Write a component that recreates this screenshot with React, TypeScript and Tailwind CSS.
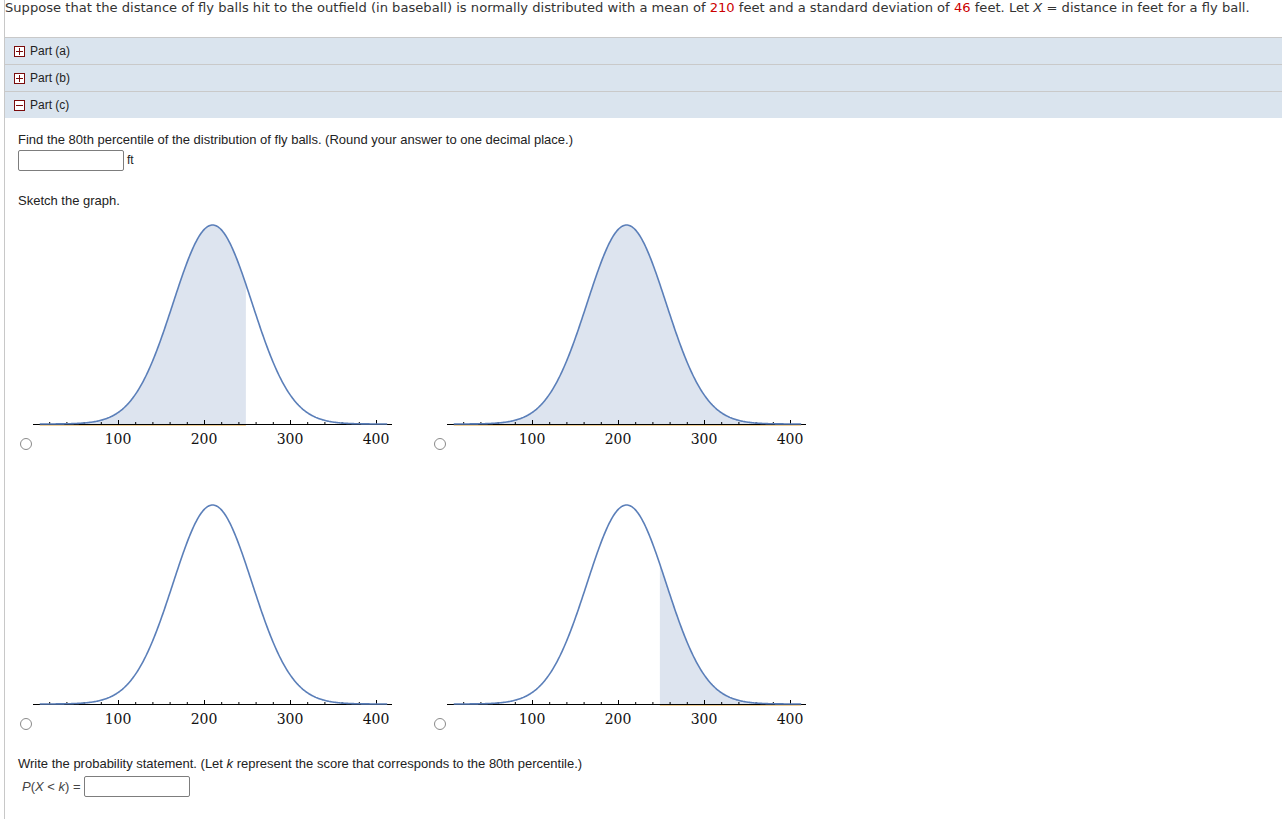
import React from 'react';

const MEAN = 210;
const SD = 46;
const PX = 0.86; // px per foot
const BASE = 209;
const PEAK = 199;
const K = 248.7;

type Shade = 'left' | 'all' | 'none' | 'right';

const xOf = (v: number) => v * PX;
const yOf = (v: number) => BASE - PEAK * Math.exp(-((v - MEAN) ** 2) / (2 * SD * SD));

const curvePoints = (from: number, to: number) => {
  const pts: string[] = [];
  let v = from;
  for (; v < to; v += 1) {
    pts.push(`${xOf(v).toFixed(2)},${yOf(v).toFixed(2)}`);
  }
  pts.push(`${xOf(to).toFixed(2)},${yOf(to).toFixed(2)}`);
  return pts;
};

const START = 9;
const END = 413;

const NormalGraph = ({ shade }: { shade: Shade }) => {
  let area: { a: number; b: number } | null = null;
  if (shade === 'left') area = { a: START, b: K };
  if (shade === 'all') area = { a: START, b: END };
  if (shade === 'right') area = { a: K, b: END };

  const ticks: number[] = [];
  for (let v = 20; v <= 400; v += 20) ticks.push(v);

  return (
    <svg width="372" height="235" viewBox="0 0 372 235" className="block">
      {area && (
        <polygon
          points={[
            `${xOf(area.a)},${BASE}`,
            ...curvePoints(area.a, area.b),
            `${xOf(area.b)},${BASE}`,
          ].join(' ')}
          fill="#dde4ef"
        />
      )}
      {area && (
        <line
          x1={xOf(area.a)}
          x2={xOf(area.b)}
          y1={BASE + 1.5}
          y2={BASE + 1.5}
          stroke="#f0cf98"
          strokeWidth="1"
        />
      )}
      <line x1="1" x2="360" y1={BASE + 0.5} y2={BASE + 0.5} stroke="#000" strokeWidth="1" />
      {ticks.map((v) => (
        <line
          key={v}
          x1={xOf(v) + 0.5}
          x2={xOf(v) + 0.5}
          y1={BASE}
          y2={v % 100 === 0 ? BASE - 4 : BASE - 2}
          stroke="#000"
          strokeWidth="1"
        />
      ))}
      <polyline
        points={curvePoints(START, END).join(' ')}
        fill="none"
        stroke="#5b7fb9"
        strokeWidth="1.6"
      />
      {[100, 200, 300, 400].map((v) => (
        <text
          key={v}
          x={xOf(v)}
          y={229}
          textAnchor="middle"
          fontSize="14"
          fill="#111"
          style={{ fontFamily: '"DejaVu Serif", "Liberation Serif", serif' }}
        >
          {v}
        </text>
      ))}
    </svg>
  );
};

const Radio = () => (
  <span className="block h-3 w-3 shrink-0 rounded-full border border-[#8a8a8a] bg-white" />
);

const PartHeader = ({ label, open }: { label: string; open?: boolean }) => (
  <div className="flex h-[27px] items-center border-t border-[#c9c9c9] bg-[#dae4ee] pl-[9px] text-[12px] text-[#222]">
    <span className="mr-[5px] flex h-[11px] w-[11px] items-center justify-center border border-[#7a0c0c] bg-white">
      <span className="relative block h-[7px] w-[7px]">
        <span className="absolute left-0 top-[3px] h-[1px] w-[7px] bg-[#7a0c0c]" />
        {!open && <span className="absolute left-[3px] top-0 h-[7px] w-[1px] bg-[#7a0c0c]" />}
      </span>
    </span>
    {label}
  </div>
);

export default function App() {
  const shades: Shade[] = ['left', 'all', 'none', 'right'];
  return (
    <div className="min-h-[819px] w-[1282px] bg-white" style={{ fontFamily: '"Liberation Sans", Arial, sans-serif' }}>
      <div className="ml-[4px] min-h-[819px] border-l border-[#c8c8c8]">
        <p
          className="h-[37px] text-[13px] leading-[15px] text-[#333]"
          style={{ fontFamily: '"DejaVu Sans", Verdana, sans-serif', fontSize: '13.1px' }}
        >
          Suppose that the distance of fly balls hit to the outfield (in baseball) is normally distributed with a mean of{' '}
          <span className="text-[#cc0000]">210</span> feet and a standard deviation of{' '}
          <span className="text-[#cc0000]">46</span> feet. Let <i>X</i> = distance in feet for a fly ball.
        </p>
        <PartHeader label="Part (a)" />
        <PartHeader label="Part (b)" />
        <PartHeader label="Part (c)" open />
        <div className="pl-[13px] pt-[14px] text-[13px] text-[#222]">
          <p className="leading-[16px]">
            Find the 80th percentile of the distribution of fly balls. (Round your answer to one decimal place.)
          </p>
          <div className="mt-[2px] flex items-start">
            <div className="h-[21px] w-[106px] rounded-[2px] border border-[#7d7d7d] bg-white" />
            <span className="ml-[3px] mt-[3px] text-[12px] leading-[14px]">ft</span>
          </div>
          <p className="mt-[22px] leading-[16px]">Sketch the graph.</p>
          <div className="ml-[2px] mt-[6px] grid grid-cols-[414px_414px] gap-y-[45px]">
            {shades.map((s) => (
              <div key={s} className="flex items-end">
                <Radio />
                <NormalGraph shade={s} />
              </div>
            ))}
          </div>
          <p className="mt-[26px] leading-[16px]">
            Write the probability statement. (Let <i>k</i> represent the score that corresponds to the 80th percentile.)
          </p>
          <div className="mt-[4px] flex items-center pl-[4px]">
            <span className="mr-[3px] text-[#444]">
              <i>P</i>(<i>X</i> &lt; <i>k</i>) =
            </span>
            <div className="h-[21px] w-[106px] rounded-[2px] border border-[#7d7d7d] bg-white" />
          </div>
        </div>
      </div>
    </div>
  );
}
